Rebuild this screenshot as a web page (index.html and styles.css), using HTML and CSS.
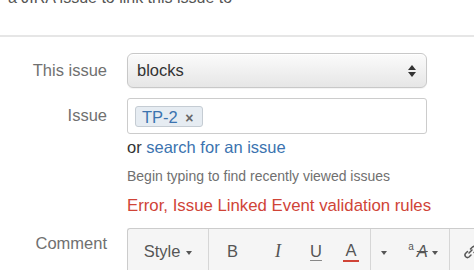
FILE: index.html
```html
<!DOCTYPE html>
<html>
<head>
    <title>Link issue</title>
    <link rel="stylesheet" href="styles.css">
</head>
<body>
    <p class="intro">a JIRA issue to link this issue to</p>
    <div class="divider"></div>

    <div class="form">
        <div class="row row-select">
            <label class="label">This issue</label>
            <div class="select">
                <span>blocks</span>
                <svg class="select-arrows" width="10" height="14" viewBox="0 0 10 14">
                    <path d="M5 1 L9 6 L1 6 Z" fill="#333"/>
                    <path d="M5 13 L9 8 L1 8 Z" fill="#333"/>
                </svg>
            </div>
        </div>

        <div class="row row-issue">
            <label class="label">Issue</label>
            <div class="field">
                <div class="picker">
                    <span class="tag">TP-2 <span class="tag-remove">&times;</span></span>
                </div>
                <div class="or-line">or <a href="#" class="link">search for an issue</a></div>
                <div class="hint">Begin typing to find recently viewed issues</div>
                <div class="error">Error, Issue Linked Event validation rules</div>
            </div>
        </div>

        <div class="row row-comment">
            <label class="label label-comment">Comment</label>
            <div class="toolbar">
                <div class="tb-group tb-style">Style <span class="caret"></span></div>
                <div class="tb-btn tb-b">B</div>
                <div class="tb-btn tb-i">I</div>
                <div class="tb-btn tb-u">U</div>
                <div class="tb-btn tb-a"><span class="color-a">A</span></div>
                <div class="tb-btn tb-caret"><span class="caret"></span></div>
                <div class="tb-btn tb-more"><span class="sup">a</span><span class="strike-a">A</span> <span class="caret"></span></div>
                <div class="tb-btn tb-link">
                    <svg width="16" height="16" viewBox="0 0 16 16">
                        <path d="M7 9 L10 6 M5.5 7.5 L3.5 9.5 a2.5 2.5 0 0 0 3.5 3.5 L9 11 M8.5 5 L10.5 3 a2.5 2.5 0 0 1 3.5 3.5 L12 8.5" stroke="#555" stroke-width="1.5" fill="none" stroke-linecap="round"/>
                    </svg>
                </div>
            </div>
        </div>
    </div>
</body>
</html>
```

FILE: styles.css
```css
body {
    margin: 0;
    font-family: 'Liberation Sans', Arial, sans-serif;
    color: #333;
    background-color: #fff;
    overflow: hidden;
}

/* Heading scrolled mostly out of view, as in the dialog */
.intro {
    margin: -12px 0 0 8px;
    font-size: 16px;
    line-height: 20px;
    color: #555;
}

.divider {
    height: 2px;
    margin-top: 27px;
    background-color: #e6e6e6;
}

.form {
    display: flex;
    flex-direction: column;
    padding-top: 16px;
}

.row {
    display: grid;
    grid-template-columns: 107px auto;
    column-gap: 20px;
    align-items: start;
}

.label {
    text-align: right;
    font-size: 16.5px;
    line-height: 35px;
    color: #707070;
}

/* Link type select */
.select {
    box-sizing: border-box;
    width: 300px;
    height: 35px;
    display: flex;
    align-items: center;
    justify-content: space-between;
    padding: 0 9px 0 9px;
    border: 1px solid #c8c8c8;
    border-radius: 6px;
    background: linear-gradient(#fbfbfb, #e6e6e6);
    box-shadow: inset 0 1px 1px rgba(255, 255, 255, 0.9), 0 1px 1px rgba(0, 0, 0, 0.05);
    font-size: 16.5px;
    color: #333;
}

.row-issue {
    margin-top: 10px;
}

.picker {
    box-sizing: border-box;
    width: 300px;
    height: 36px;
    display: flex;
    align-items: center;
    padding: 0 7px;
    border: 1px solid #ccc;
    border-radius: 3px;
    background-color: #fff;
}

.tag {
    display: inline-block;
    height: 21px;
    line-height: 20px;
    box-sizing: border-box;
    padding: 0 8px 0 6px;
    border: 1px solid #c5ccd3;
    border-radius: 3px;
    background-color: #e6ecf2;
    color: #3b73af;
    font-size: 16.5px;
}

.tag-remove {
    color: #666;
    font-size: 14px;
    font-weight: bold;
    margin-left: 3px;
}

.or-line {
    margin-top: 3px;
    font-size: 16.5px;
    line-height: 20px;
    color: #333;
}

.link {
    color: #3b73af;
    text-decoration: none;
}

.hint {
    margin-top: 10px;
    font-size: 14px;
    line-height: 18px;
    color: #707070;
}

.error {
    margin-top: 11px;
    font-size: 16.8px;
    line-height: 20px;
    color: #d04437;
}

/* Comment editor toolbar, running off the right edge */
.row-comment {
    margin-top: 12px;
}

.label-comment {
    line-height: 20px;
    padding-top: 5px;
}

.toolbar {
    box-sizing: border-box;
    width: 347px;
    height: 48px;
    display: flex;
    align-items: stretch;
    overflow: hidden;
    border: 1px solid #ccc;
    border-right: none;
    border-bottom: none;
    border-radius: 3px 0 0 0;
    background-color: #f5f5f5;
    font-size: 16.5px;
    color: #555;
}

.tb-group,
.tb-btn {
    flex-shrink: 0;
    display: flex;
    align-items: center;
    justify-content: center;
    padding-bottom: 2px;
}

.tb-style {
    width: 80px;
    border-right: 1px solid #d6d6d6;
    gap: 6px;
}

.caret {
    display: inline-block;
    width: 0;
    height: 0;
    border-left: 3.5px solid transparent;
    border-right: 3.5px solid transparent;
    border-top: 4px solid #555;
    margin-top: 2px;
}

.tb-b { width: 47px; }

.tb-i {
    width: 44px;
    font-family: 'Liberation Serif', serif;
    font-style: italic;
    font-size: 18px;
}

.tb-u {
    width: 32px;
    text-decoration: underline;
    text-decoration-color: #888;
    text-underline-offset: 3px;
}

.tb-a {
    width: 38px;
    border-right: 1px solid #d6d6d6;
}

.color-a {
    border-bottom: 2px solid #d04437;
    padding: 0 2px 2px;
    line-height: 16px;
}

.tb-caret {
    width: 26px;
}

.tb-more {
    width: 52px;
    border-right: 1px solid #d6d6d6;
    gap: 4px;
}

.sup {
    font-size: 10px;
    align-self: center;
    margin-bottom: 10px;
    margin-right: -1px;
}

.strike-a {
    font-style: italic;
    text-decoration: line-through;
}

.tb-link {
    width: 28px;
    justify-content: flex-end;
}
```
